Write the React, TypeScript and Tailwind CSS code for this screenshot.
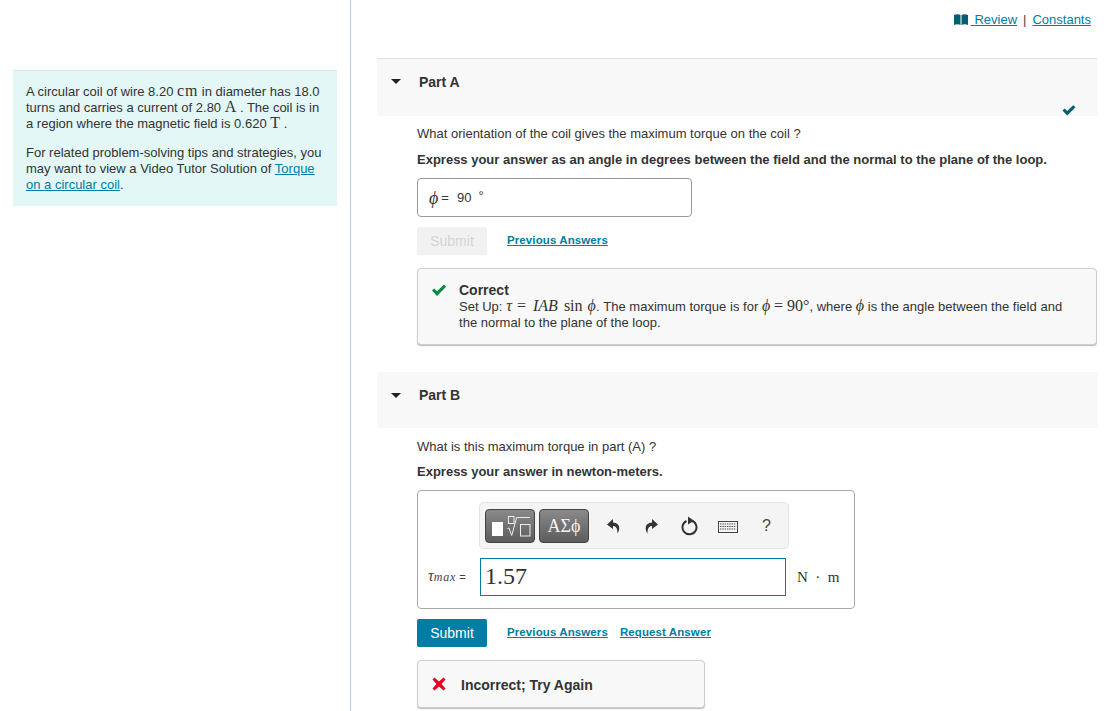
const SANS = "font-['Liberation_Sans',Arial,sans-serif]"
const linkClass = 'text-[#007da5] underline'
const smallLink = 'text-[11.5px] font-bold tracking-[0.1px]'

function Serif({ children, italic }: { children: React.ReactNode; italic?: boolean }) {
  return <span className={`font-['Liberation_Serif',serif] text-[16px] leading-[0] ${italic ? 'italic' : ''}`}>{children}</span>
}

function PartHeader({ label, check }: { label: string; check?: boolean }) {
  return (
    <div className={`relative bg-[#f8f8f8] flex items-start pl-[14px] ${check ? 'h-[58px] border-t border-[#e2e2e2]' : 'h-[56px]'}`}>
      <div className={`w-0 h-0 border-x-[5.5px] border-x-transparent border-t-[5px] border-t-[#222] ${check ? 'mt-[20px]' : 'mt-[21px]'}`} />
      <span className="ml-[18px] mt-[14px] text-[14px] leading-[18px] font-bold text-[#333]">{label}</span>
      {check && (
        <svg className="absolute right-[21px] top-[46px]" width="14" height="11" viewBox="0 0 14 11">
          <path d="M0.5 5.5 L2.6 3.4 L5.2 6 L11.2 0.2 L13.5 2.3 L5.2 10.5 Z" fill="#005e74" />
        </svg>
      )}
    </div>
  )
}

function Toolbar() {
  return (
    <div className="w-[310px] h-[47px] bg-[#f4f4f4] border border-[#e4e4e4] rounded-[5px] flex items-center pl-[5px]">
      <div className="w-[50px] h-[34px] rounded-[4px] border border-[#444] bg-gradient-to-b from-[#8a8a8a] to-[#5c5c5c]">
        <svg className="-ml-px -mt-px" width="50" height="34" viewBox="0 0 50 34">
          <rect x="7" y="13" width="11" height="14" fill="#fff" />
          <rect x="23.5" y="7.5" width="5.5" height="7" fill="none" stroke="#eee" strokeWidth="1" />
          <path d="M22.5 19.5 L24 19 L26.7 26.5 L31.7 8.5 L45 8.5" fill="none" stroke="#eee" strokeWidth="1" />
          <rect x="35.5" y="15.5" width="9.5" height="11.5" fill="none" stroke="#eee" strokeWidth="1" />
        </svg>
      </div>
      <div className="ml-[4px] w-[50px] h-[34px] rounded-[4px] border border-[#444] bg-gradient-to-b from-[#8a8a8a] to-[#5c5c5c] flex items-center justify-center font-['Liberation_Serif',serif] text-[18px] text-[#f2f2f2]">
        ΑΣϕ
      </div>
      <svg className="ml-[17px]" width="15" height="16" viewBox="0 0 15 16">
        <path d="M7 1 L1 6.5 L7 11 V8 C10 8 11.5 10 11.5 15.5 C14 12 15 5 7 4.5 Z" fill="#333" />
      </svg>
      <svg className="ml-[23px]" width="15" height="16" viewBox="0 0 15 16">
        <path d="M8 1 L14 6.5 L8 11 V8 C5 8 3.5 10 3.5 15.5 C1 12 0 5 8 4.5 Z" fill="#333" />
      </svg>
      <svg className="ml-[22px] mt-[1px]" width="17" height="20" viewBox="0 0 17 20">
        <path d="M5.5 5 A7 7 0 1 0 11 4.8" fill="none" stroke="#333" strokeWidth="2" />
        <path d="M7 0.5 L13 4.8 L7 8.5 Z" fill="#333" />
      </svg>
      <svg className="ml-[20px] mt-[2px]" width="20" height="12" viewBox="0 0 20 12">
        <rect x="0.5" y="0.5" width="19" height="11" fill="#f4f4f4" stroke="#444" />
        <path d="M2 3 H18 M2 5.5 H18 M2 8 H18" stroke="#555" strokeWidth="1" strokeDasharray="1.5 0.8" />
      </svg>
      <span className="ml-[24px] text-[16px] text-[#444]">?</span>
    </div>
  )
}

export default function App() {
  return (
    <div className={`${SANS} flex w-[1115px] h-[711px] overflow-hidden bg-white text-[13px] leading-[16px] text-[#333]`}>
      <div className="w-[351px] shrink-0 border-r border-[#b4cfe6] pt-[70px] pl-[13px] pr-[13px]">
        <div className="w-[324px] h-[136px] bg-[#e2f7f6] border-t border-[#dfe6ea] pt-[13px] pl-[13px] pr-[12px]">
          <p>
            A circular coil of wire 8.20 <span className="tracking-[0.8px]"><Serif>cm</Serif></span> in diameter has 18.0 turns and carries a current of 2.80 <Serif>A</Serif> . The coil is in a region where the magnetic field is 0.620 <Serif>T</Serif> .
          </p>
          <p className="mt-[13px]">
            For related problem-solving tips and strategies, you may want to view a Video Tutor Solution of{' '}
            <a className={linkClass}>Torque on a circular coil</a>.
          </p>
        </div>
      </div>

      <div className="flex-1 pl-[26px] pr-[18px]">
        <div className="h-[58px] flex justify-end items-start pt-[12px] pr-[6px]">
          <svg className="mt-[2px] mr-[3px]" width="14" height="11" viewBox="0 0 14 11">
            <path d="M0 1 C2 0 5 0 6.5 1 V11 C5 10 2 10 0 11 Z M7.5 1 C9 0 12 0 14 1 V11 C12 10 9 10 7.5 11 Z" fill="#005e74" />
          </svg>
          <a className={linkClass}>&nbsp;Review</a>
          <span className="mx-[6px] text-[#444]">|</span>
          <a className={linkClass}>Constants</a>
        </div>

        <PartHeader label="Part A" check />
        <div className="pl-[40px]">
          <p className="mt-[10px]">What orientation of the coil gives the maximum torque on the coil ?</p>
          <p className="mt-[10px] font-bold">Express your answer as an angle in degrees between the field and the normal to the plane of the loop.</p>
          <div className="mt-[10px] w-[275px] h-[39px] border border-[#999] rounded-[4px] flex items-center pl-[11px]">
            <span className="font-['Liberation_Serif',serif] italic text-[18px] leading-none">ϕ</span>
            <span className="ml-[3px]">=</span>
            <span className="ml-[8px]">90</span>
            <span className="ml-[7px] -mt-[4px] text-[13px]">°</span>
          </div>
          <div className="mt-[10px] flex items-center">
            <div className="w-[70px] h-[28px] bg-[#f1f1f1] text-[#d4d4d4] text-[14px] rounded-[2px] flex items-center justify-center">Submit</div>
            <a className={`${linkClass} ${smallLink} ml-[20px] -mt-[2px]`}>Previous Answers</a>
          </div>
          <div className="mt-[13px] w-[680px] h-[77px] bg-[#f8f8f8] border border-[#cfcfcf] rounded-[4px] shadow-[0_1px_1px_#bbb] flex pl-[13px] pt-[13px]">
            <svg className="mt-[2px] shrink-0" width="16" height="13" viewBox="0 0 16 13">
              <path d="M1 6.5 L3.2 4.4 L6 7.2 L13 0.6 L15 2.8 L6 12 Z" fill="#008a3c" />
            </svg>
            <div className="ml-[12px]">
              <div className="text-[14px] font-bold leading-[16px]">Correct</div>
              <div className="w-[620px] mt-[1px] tracking-[0.02px]">
                Set Up: <Serif italic>τ</Serif><span className="ml-[5px]"><Serif>=</Serif></span><span className="ml-[7px]"><Serif italic>IAB</Serif></span><span className="ml-[6px]"><Serif>sin</Serif></span><span className="ml-[5px]"><Serif italic>ϕ</Serif></span>. The maximum torque is for <Serif italic>ϕ</Serif> <Serif>= 90°</Serif>, where <Serif italic>ϕ</Serif> is the angle between the field and
                <br />
                the normal to the plane of the loop.
              </div>
            </div>
          </div>
        </div>

        <div className="mt-[27px]">
          <PartHeader label="Part B" />
        </div>
        <div className="pl-[40px]">
          <p className="mt-[11px]">What is this maximum torque in part (A) ?</p>
          <p className="mt-[9px] font-bold">Express your answer in newton-meters.</p>
          <div className="mt-[10px] w-[438px] h-[119px] border border-[#aaa] rounded-[4px] pl-[12px] pt-[11px]">
            <div className="ml-[49px]">
              <Toolbar />
            </div>
            <div className="mt-[9px] flex items-center">
              <span className="w-[46px] shrink-0 text-[#444] whitespace-nowrap -ml-[2px]">
                <Serif italic>τ</Serif>
                <span className="font-['Liberation_Serif',serif] italic text-[12px] tracking-[0.8px]">max</span>
                <span className="text-[11px]"> =</span>
              </span>
              <div className="ml-[6px] w-[306px] h-[38px] border border-[#007da5] font-['Liberation_Serif',serif] text-[24px] leading-[34px] pl-[4px] text-[#333]">1.57</div>
              <span className="ml-[11px] font-['Liberation_Serif',serif] text-[15px] text-[#333] whitespace-pre">N  ·  m</span>
            </div>
          </div>
          <div className="mt-[10px] flex items-center">
            <div className="w-[70px] h-[28px] bg-[#007da5] text-white text-[14px] rounded-[2px] flex items-center justify-center">Submit</div>
            <a className={`${linkClass} ${smallLink} ml-[20px] -mt-[2px]`}>Previous Answers</a>
            <a className={`${linkClass} ${smallLink} ml-[12px] -mt-[2px]`}>Request Answer</a>
          </div>
          <div className="mt-[13px] w-[288px] h-[48px] bg-[#f8f8f8] border border-[#cfcfcf] rounded-[4px] shadow-[0_1px_1px_#bbb] flex items-center pl-[14px]">
            <svg width="14" height="14" viewBox="0 0 14 14">
              <path d="M2.5 0.5 L7 4.5 L11.5 0.5 L13.5 2.5 L9.5 7 L13.5 11.5 L11.5 13.5 L7 9.5 L2.5 13.5 L0.5 11.5 L4.5 7 L0.5 2.5 Z" fill="#e6001e" />
            </svg>
            <span className="ml-[15px] mt-[2px] text-[14px] font-bold">Incorrect; Try Again</span>
          </div>
        </div>
      </div>
    </div>
  )
}
